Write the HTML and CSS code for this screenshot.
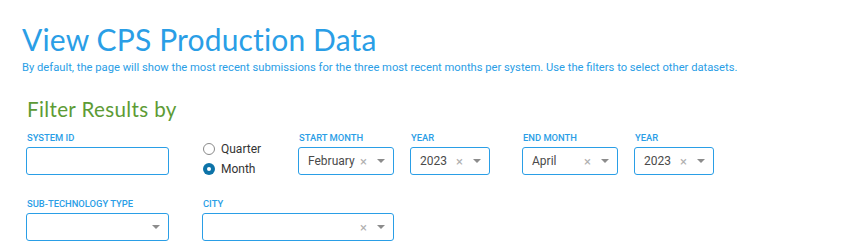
FILE: index.html
```html
<!DOCTYPE html>
<html lang="en">
<head>
<meta charset="utf-8">
<title>View CPS Production Data</title>
<link rel="stylesheet" href="styles.css">
</head>
<body>
<div class="page">
  <h1 class="title">View CPS Production Data</h1>
  <p class="intro">By default, the page will show the most recent submissions for the three most recent months per system. Use the filters to select other datasets.</p>

  <section class="filters">
    <h2 class="filters-title">Filter Results by</h2>
    <div class="grid">
      <div class="field">
        <label class="label">SYSTEM ID</label>
        <div class="box input-box w143"></div>
      </div>
      <div class="radios">
        <div class="radio-row"><span class="radio"></span><span class="radio-text">Quarter</span></div>
        <div class="radio-row"><span class="radio checked"></span><span class="radio-text">Month</span></div>
      </div>
      <div class="field">
        <label class="label">START MONTH</label>
        <div class="box select w96"><span class="value">February</span><span class="clear">×</span><span class="caret"></span></div>
      </div>
      <div class="field">
        <label class="label">YEAR</label>
        <div class="box select w80"><span class="value">2023</span><span class="clear">×</span><span class="caret"></span></div>
      </div>
      <div class="field">
        <label class="label">END MONTH</label>
        <div class="box select w96"><span class="value">April</span><span class="clear">×</span><span class="caret"></span></div>
      </div>
      <div class="field">
        <label class="label">YEAR</label>
        <div class="box select w80"><span class="value">2023</span><span class="clear">×</span><span class="caret"></span></div>
      </div>

      <div class="field row2">
        <label class="label">SUB-TECHNOLOGY TYPE</label>
        <div class="box select w143"><span class="value"></span><span class="caret"></span></div>
      </div>
      <div class="field row2 span2">
        <label class="label">CITY</label>
        <div class="box select w192"><span class="value"></span><span class="clear">×</span><span class="caret"></span></div>
      </div>
    </div>
  </section>
</div>
</body>
</html>
```

FILE: styles.css
```css
html, body {
  margin: 0;
  padding: 0;
  background: #ffffff;
}

.page {
  padding: 22px 0 0 22px;
  font-family: Roboto, "Liberation Sans", sans-serif;
}

.title {
  margin: 0;
  font-family: Lato, "Open Sans", sans-serif;
  font-weight: 400;
  font-size: 30px;
  line-height: 34px;
  color: #2a9ee6;
  letter-spacing: 0.15px;
}

.intro {
  margin: 5px 0 0 0;
  font-size: 11.2px;
  line-height: 14px;
  color: #2a9ee6;
}

.filters {
  padding-left: 5px;
  margin-top: 22px;
}

.filters-title {
  margin: 0;
  font-family: Lato, "Open Sans", sans-serif;
  font-weight: 400;
  font-size: 20.6px;
  line-height: 24px;
  color: #5d9b35;
  letter-spacing: 0.35px;
}

.grid {
  margin-top: 11px;
  margin-left: -1px;
  display: grid;
  grid-template-columns: 160px 80px 96px 96px 96px 80px;
  column-gap: 16px;
  row-gap: 22px;
  align-items: start;
}

.field {
  display: flex;
  flex-direction: column;
}

.span2 {
  grid-column: 2 / span 2;
}

.row2 {
  grid-row: 2;
}

.label {
  display: block;
  font-size: 9.4px;
  line-height: 12px;
  font-weight: 500;
  color: #2a9ee6;
  padding-left: 1px;
  margin-bottom: 3px;
}

.box {
  box-sizing: border-box;
  height: 28px;
  border: 1px solid #2a9ee6;
  border-radius: 3px;
  background: #fff;
}

.w143 { width: 143px; }
.w96 { width: 96px; }
.w80 { width: 80px; }
.w192 { width: 192px; }

.select {
  display: flex;
  align-items: center;
  padding: 0 8px 0 9px;
}

.value {
  flex: 1;
  font-size: 12px;
  color: #4a4a4a;
}

.clear {
  font-size: 13px;
  color: #b0b0b0;
  margin-right: 10px;
  line-height: 1;
}

.caret {
  width: 0;
  height: 0;
  border-left: 4px solid transparent;
  border-right: 4px solid transparent;
  border-top: 4px solid #8c8c8c;
}

.radios {
  padding-top: 10px;
  display: flex;
  flex-direction: column;
  gap: 6px;
}

.radio-row {
  display: flex;
  align-items: center;
  height: 14px;
}

.radio {
  box-sizing: border-box;
  width: 12px;
  height: 12px;
  border-radius: 50%;
  border: 1px solid #8a8a8a;
  margin-left: 1px;
  margin-right: 6px;
  position: relative;
}

.radio.checked {
  border: none;
  background: #0d73a8;
}

.radio.checked::after {
  content: "";
  position: absolute;
  left: 4px;
  top: 4px;
  width: 4px;
  height: 4px;
  border-radius: 50%;
  background: #fff;
}

.radio-text {
  font-size: 12px;
  color: #333;
}
```
